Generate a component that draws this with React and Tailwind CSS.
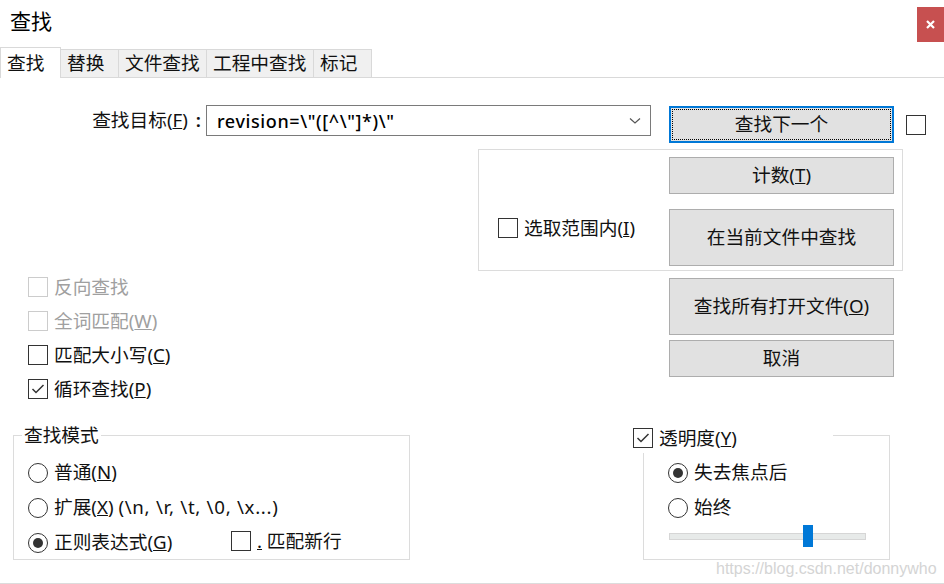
import React from 'react';

const FONT = { fontFamily: '"Noto Sans", "Noto Sans CJK SC", sans-serif' };

function Box({ checked, disabled }) {
  return (
    <span className={`flex w-[20px] h-[20px] shrink-0 items-center justify-center border bg-white ${disabled ? 'border-[#cccccc]' : 'border-[#333333]'}`}>
      {checked && (
        <svg width="16" height="16" viewBox="0 0 16 16">
          <path d="M2.5 8 L6 11.5 L13.5 4" fill="none" stroke="#333" strokeWidth="1.5" />
        </svg>
      )}
    </span>
  );
}

function Radio({ on }) {
  return (
    <span className="flex w-[20px] h-[20px] shrink-0 items-center justify-center rounded-full border border-[#333333] bg-white">
      {on && <span className="w-[10px] h-[10px] rounded-full bg-[#333333]" />}
    </span>
  );
}

function Check({ children, checked, disabled }) {
  return (
    <div className="flex h-[34px] items-center">
      <Box checked={checked} disabled={disabled} />
      <span className={`ml-[6px] text-[18.7px] leading-none ${disabled ? 'text-[#a0a0a0]' : 'text-[#111]'}`}>{children}</span>
    </div>
  );
}

function Btn({ children, h }) {
  return (
    <button type="button" className={`flex w-[225px] ${h} items-center justify-center border border-[#adadad] bg-[#e1e1e1] text-[18.7px] leading-none text-[#111]`}>
      {children}
    </button>
  );
}

export default function App() {
  const tabs = [
    ['替换', 'w-[58px]'],
    ['文件查找', 'w-[88px]'],
    ['工程中查找', 'w-[107px]'],
    ['标记', 'w-[58px]'],
  ];
  return (
    <div className="relative flex h-[584px] w-[944px] flex-col overflow-hidden border-b border-[#dcdcdc] bg-white text-[#111]" style={FONT}>
      {/* title bar */}
      <div className="flex h-[47px] shrink-0 justify-between">
        <div className="pl-[10px] pt-[8px] text-[21px] leading-[26px] text-black">查找</div>
        <div className="mt-[7px] flex h-[35px] w-[27px] items-center justify-center bg-[#c75050]">
          <svg width="9" height="9" viewBox="0 0 9 9">
            <path d="M1 1 L8 8 M8 1 L1 8" stroke="#fff" strokeWidth="2.2" />
          </svg>
        </div>
      </div>

      {/* tabs */}
      <div className="flex h-[31px] shrink-0 items-end border-b border-[#d9d9d9]">
        <div className="-mb-px flex h-[31px] w-[61px] items-center border border-b-0 border-[#d9d9d9] bg-white pl-[6px] text-[18.7px] leading-none">查找</div>
        {tabs.map(([t, w]) => (
          <div key={t} className={`flex h-[28px] ${w} items-center border-r border-t border-[#d9d9d9] bg-[#f0f0f0] pl-[6px] text-[18.7px] leading-none`}>{t}</div>
        ))}
      </div>

      {/* search row */}
      <div className="mt-[27px] flex h-[38px] shrink-0 items-start">
        <div className="flex h-[31px] w-[206px] items-center justify-end pr-[5px] text-[18.7px] leading-none">
          查找目标(<u>F</u>)<span className="ml-[8px] font-semibold">:</span>
        </div>
        <div className="flex h-[31px] w-[445px] items-center justify-between border border-[#7a7a7a] pl-[10px] pr-[9px]">
          <span className="text-[18px] font-medium leading-none tracking-[0.6px] text-black">{'revision=\\"([^\\"]*)\\"'}</span>
          <svg width="12" height="8" viewBox="0 0 12 8">
            <path d="M1 1.5 L6 6 L11 1.5" fill="none" stroke="#555" strokeWidth="1.2" />
          </svg>
        </div>
        <button type="button" className="relative ml-[18px] mt-[1px] flex h-[37px] w-[225px] items-center justify-center border-2 border-[#0078d7] bg-[#e1e1e1] text-[18.7px] leading-none">
          <span className="pointer-events-none absolute inset-[1px] border border-dotted border-black" />
          查找下一个
        </button>
        <span className="ml-[12px] mt-[10px] block h-[20px] w-[20px] border border-[#333]" />
      </div>

      {/* main area */}
      <div className="flex h-[285px] shrink-0">
        <div className="w-[478px] pl-[28px] pt-[127px]">
          <Check disabled>反向查找</Check>
          <Check disabled>全词匹配(<u>W</u>)</Check>
          <Check>匹配大小写(<u>C</u>)</Check>
          <Check checked>循环查找(<u>P</u>)</Check>
        </div>
        <div className="flex flex-col">
          <div className="mt-[6px] flex h-[122px] w-[425px] border border-[#dcdcdc]">
            <div className="w-[190px] pl-[19px] pt-[68px]">
              <div className="flex items-center">
                <Box />
                <span className="ml-[6px] text-[18.7px] leading-none">选取范围内(<u>I</u>)</span>
              </div>
            </div>
            <div className="flex flex-col pt-[7px]">
              <Btn h="h-[37px]">计数(<u>T</u>)</Btn>
              <div className="h-[15px]" />
              <Btn h="h-[57px]">在当前文件中查找</Btn>
            </div>
          </div>
          <div className="ml-[191px] mt-[7px] flex flex-col gap-[5px]">
            <Btn h="h-[57px]">查找所有打开文件(<u>O</u>)</Btn>
            <Btn h="h-[37px]">取消</Btn>
          </div>
        </div>
      </div>

      {/* bottom groups */}
      <div className="flex shrink-0 items-start">
        <div className="relative ml-[13px] mt-[7px] h-[125px] w-[397px] border border-[#dcdcdc] pl-[14px] pt-[19px]">
          <div className="absolute -top-[12px] left-[8px] bg-white px-[2px] text-[18.7px] leading-[22px]">查找模式</div>
          <div className="flex h-[35px] items-center">
            <Radio />
            <span className="ml-[6px] text-[18.7px] leading-none">普通(<u>N</u>)</span>
          </div>
          <div className="flex h-[35px] items-center">
            <Radio />
            <span className="ml-[6px] text-[18.7px] leading-none">扩展(<u>X</u>) <span className="tracking-[0.7px]">(\n, \r, \t, \0, \x...)</span></span>
          </div>
          <div className="flex h-[35px] items-center">
            <Radio on />
            <span className="ml-[6px] w-[177px] text-[18.7px] leading-none">正则表达式(<u>G</u>)</span>
            <span className="mt-[-3px] block h-[20px] w-[20px] border border-[#333]" />
            <span className="ml-[6px] mt-[-3px] text-[18.7px] leading-none"><u>.</u> 匹配新行</span>
          </div>
        </div>

        <div className="relative ml-[223px] h-[132px] w-[257px]">
          <div className="absolute left-0 top-0 flex h-[25px] w-[200px] items-start bg-white">
            <Box checked />
            <span className="ml-[6px] text-[18.7px] leading-[20px]">透明度(<u>Y</u>)</span>
          </div>
          <div className="ml-[10px] mt-[7px] h-[125px] w-[247px] border border-[#dcdcdc] pl-[24px] pt-[19px]">
            <div className="flex h-[35px] items-center">
              <Radio on />
              <span className="ml-[6px] text-[18.7px] leading-none">失去焦点后</span>
            </div>
            <div className="flex h-[35px] items-center">
              <Radio />
              <span className="ml-[6px] text-[18.7px] leading-none">始终</span>
            </div>
            <div className="relative ml-[1px] flex h-[22px] w-[197px] items-center">
              <div className="h-[7px] w-full border border-[#d6d6d6] bg-[#e7eae9]" />
              <div className="absolute left-[134px] top-0 h-[22px] w-[10px] bg-[#0078d7]" />
            </div>
          </div>
        </div>
      </div>

      <div className="absolute bottom-[6px] left-[716px] text-[16px] leading-none text-[#d4d4d4]" style={{ fontFamily: '"Liberation Sans", sans-serif' }}>
        https://blog.csdn.net/donnywho
      </div>
    </div>
  );
}
